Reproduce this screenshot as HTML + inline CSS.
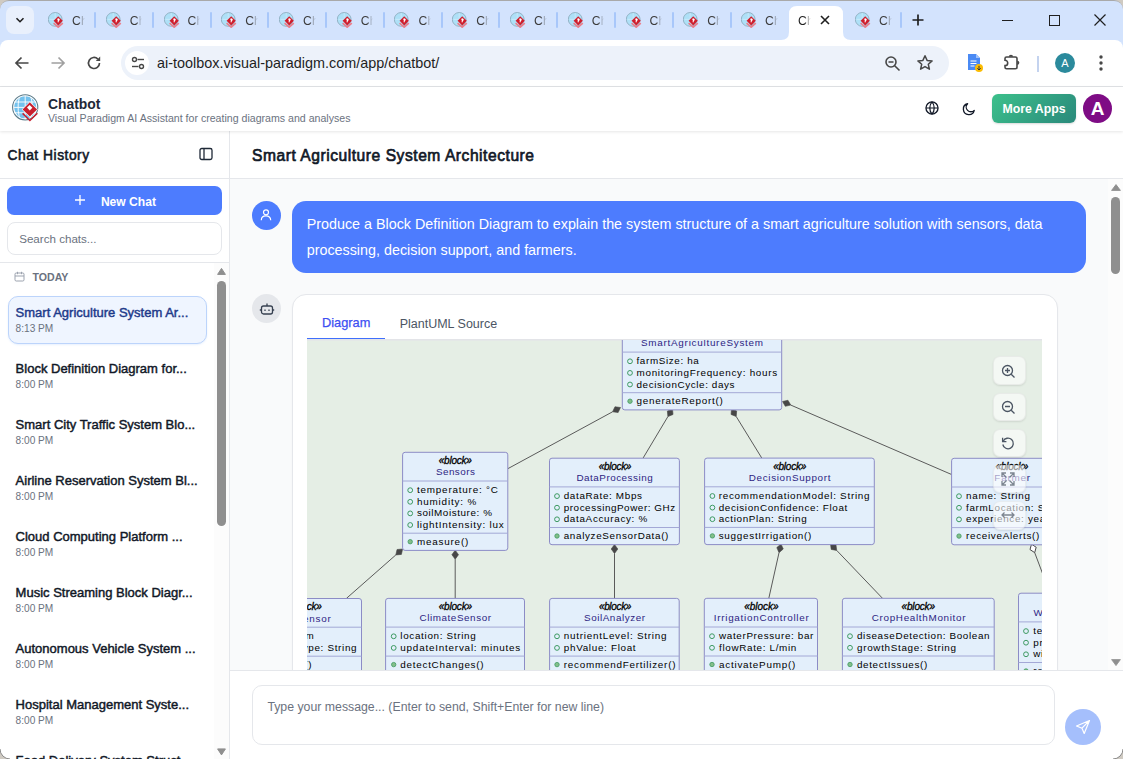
<!DOCTYPE html>
<html><head><meta charset="utf-8">
<style>
*{box-sizing:border-box;margin:0;padding:0}
html,body{width:1123px;height:759px;overflow:hidden;background:#fff;font-family:"Liberation Sans",sans-serif;position:relative}
.abs{position:absolute}
.tabtxt{position:absolute;top:13px;font-size:12.3px;color:#3c3c3c;width:12.5px;overflow:hidden;white-space:nowrap;line-height:16px;-webkit-mask-image:linear-gradient(90deg,#000 50%,rgba(0,0,0,.35) 80%,transparent 100%)}
</style></head><body>
<div class="abs" style="left:0;top:0;width:1123px;height:12px;background:#cfcac2"></div>
<div class="abs" style="left:0;top:0;width:1123px;height:48px;background:#d3e3fd;border-radius:9px 9px 0 0;border-top:1px solid #a9a9a9"></div>
<div class="abs" style="left:6px;top:6px;width:28px;height:28px;border-radius:8px;background:#e9f0fc"></div>
<svg class="abs" style="left:14px;top:14px" width="12" height="12" viewBox="0 0 12 12"><path d="M2.5 4.2L6 7.7 9.5 4.2" stroke="#1f1f1f" stroke-width="1.6" fill="none"/></svg>
<svg class="abs" style="left:48px;top:12px" width="16" height="16" viewBox="0 0 16 16"><circle cx="7.2" cy="7.4" r="6.9" fill="#aee0f7" stroke="#90aebf" stroke-width="0.9"/><path d="M1.5 7.4h11.5M7.2 1v12.8" stroke="#d6f0fb" stroke-width="0.6" fill="none"/><path d="M5.6 11.2l4.6 4 4.6-4" stroke="#ec7a88" stroke-width="1.6" fill="none"/><path d="M10.2 4.2l4.6 4.6-4.6 4.6-4.6-4.6z" fill="#cf1d2c"/><path d="M9.2 7.2a1.3 1.3 0 1 1 1.8 1.6l-0.6 1.6-0.8-0.2 0.2-1.6z" fill="#fff"/></svg>
<div class="tabtxt" style="left:72.0px">Ch</div>
<div class="abs" style="left:94.2px;top:12px;width:2px;height:16px;background:#a8c7fa;border-radius:1px"></div>
<svg class="abs" style="left:106px;top:12px" width="16" height="16" viewBox="0 0 16 16"><circle cx="7.2" cy="7.4" r="6.9" fill="#aee0f7" stroke="#90aebf" stroke-width="0.9"/><path d="M1.5 7.4h11.5M7.2 1v12.8" stroke="#d6f0fb" stroke-width="0.6" fill="none"/><path d="M5.6 11.2l4.6 4 4.6-4" stroke="#ec7a88" stroke-width="1.6" fill="none"/><path d="M10.2 4.2l4.6 4.6-4.6 4.6-4.6-4.6z" fill="#cf1d2c"/><path d="M9.2 7.2a1.3 1.3 0 1 1 1.8 1.6l-0.6 1.6-0.8-0.2 0.2-1.6z" fill="#fff"/></svg>
<div class="tabtxt" style="left:129.8px">Ch</div>
<div class="abs" style="left:151.9px;top:12px;width:2px;height:16px;background:#a8c7fa;border-radius:1px"></div>
<svg class="abs" style="left:164px;top:12px" width="16" height="16" viewBox="0 0 16 16"><circle cx="7.2" cy="7.4" r="6.9" fill="#aee0f7" stroke="#90aebf" stroke-width="0.9"/><path d="M1.5 7.4h11.5M7.2 1v12.8" stroke="#d6f0fb" stroke-width="0.6" fill="none"/><path d="M5.6 11.2l4.6 4 4.6-4" stroke="#ec7a88" stroke-width="1.6" fill="none"/><path d="M10.2 4.2l4.6 4.6-4.6 4.6-4.6-4.6z" fill="#cf1d2c"/><path d="M9.2 7.2a1.3 1.3 0 1 1 1.8 1.6l-0.6 1.6-0.8-0.2 0.2-1.6z" fill="#fff"/></svg>
<div class="tabtxt" style="left:187.5px">Ch</div>
<div class="abs" style="left:209.7px;top:12px;width:2px;height:16px;background:#a8c7fa;border-radius:1px"></div>
<svg class="abs" style="left:221px;top:12px" width="16" height="16" viewBox="0 0 16 16"><circle cx="7.2" cy="7.4" r="6.9" fill="#aee0f7" stroke="#90aebf" stroke-width="0.9"/><path d="M1.5 7.4h11.5M7.2 1v12.8" stroke="#d6f0fb" stroke-width="0.6" fill="none"/><path d="M5.6 11.2l4.6 4 4.6-4" stroke="#ec7a88" stroke-width="1.6" fill="none"/><path d="M10.2 4.2l4.6 4.6-4.6 4.6-4.6-4.6z" fill="#cf1d2c"/><path d="M9.2 7.2a1.3 1.3 0 1 1 1.8 1.6l-0.6 1.6-0.8-0.2 0.2-1.6z" fill="#fff"/></svg>
<div class="tabtxt" style="left:245.2px">Ch</div>
<div class="abs" style="left:267.4px;top:12px;width:2px;height:16px;background:#a8c7fa;border-radius:1px"></div>
<svg class="abs" style="left:279px;top:12px" width="16" height="16" viewBox="0 0 16 16"><circle cx="7.2" cy="7.4" r="6.9" fill="#aee0f7" stroke="#90aebf" stroke-width="0.9"/><path d="M1.5 7.4h11.5M7.2 1v12.8" stroke="#d6f0fb" stroke-width="0.6" fill="none"/><path d="M5.6 11.2l4.6 4 4.6-4" stroke="#ec7a88" stroke-width="1.6" fill="none"/><path d="M10.2 4.2l4.6 4.6-4.6 4.6-4.6-4.6z" fill="#cf1d2c"/><path d="M9.2 7.2a1.3 1.3 0 1 1 1.8 1.6l-0.6 1.6-0.8-0.2 0.2-1.6z" fill="#fff"/></svg>
<div class="tabtxt" style="left:303.0px">Ch</div>
<div class="abs" style="left:325.2px;top:12px;width:2px;height:16px;background:#a8c7fa;border-radius:1px"></div>
<svg class="abs" style="left:337px;top:12px" width="16" height="16" viewBox="0 0 16 16"><circle cx="7.2" cy="7.4" r="6.9" fill="#aee0f7" stroke="#90aebf" stroke-width="0.9"/><path d="M1.5 7.4h11.5M7.2 1v12.8" stroke="#d6f0fb" stroke-width="0.6" fill="none"/><path d="M5.6 11.2l4.6 4 4.6-4" stroke="#ec7a88" stroke-width="1.6" fill="none"/><path d="M10.2 4.2l4.6 4.6-4.6 4.6-4.6-4.6z" fill="#cf1d2c"/><path d="M9.2 7.2a1.3 1.3 0 1 1 1.8 1.6l-0.6 1.6-0.8-0.2 0.2-1.6z" fill="#fff"/></svg>
<div class="tabtxt" style="left:360.8px">Ch</div>
<div class="abs" style="left:382.9px;top:12px;width:2px;height:16px;background:#a8c7fa;border-radius:1px"></div>
<svg class="abs" style="left:394px;top:12px" width="16" height="16" viewBox="0 0 16 16"><circle cx="7.2" cy="7.4" r="6.9" fill="#aee0f7" stroke="#90aebf" stroke-width="0.9"/><path d="M1.5 7.4h11.5M7.2 1v12.8" stroke="#d6f0fb" stroke-width="0.6" fill="none"/><path d="M5.6 11.2l4.6 4 4.6-4" stroke="#ec7a88" stroke-width="1.6" fill="none"/><path d="M10.2 4.2l4.6 4.6-4.6 4.6-4.6-4.6z" fill="#cf1d2c"/><path d="M9.2 7.2a1.3 1.3 0 1 1 1.8 1.6l-0.6 1.6-0.8-0.2 0.2-1.6z" fill="#fff"/></svg>
<div class="tabtxt" style="left:418.5px">Ch</div>
<div class="abs" style="left:440.7px;top:12px;width:2px;height:16px;background:#a8c7fa;border-radius:1px"></div>
<svg class="abs" style="left:452px;top:12px" width="16" height="16" viewBox="0 0 16 16"><circle cx="7.2" cy="7.4" r="6.9" fill="#aee0f7" stroke="#90aebf" stroke-width="0.9"/><path d="M1.5 7.4h11.5M7.2 1v12.8" stroke="#d6f0fb" stroke-width="0.6" fill="none"/><path d="M5.6 11.2l4.6 4 4.6-4" stroke="#ec7a88" stroke-width="1.6" fill="none"/><path d="M10.2 4.2l4.6 4.6-4.6 4.6-4.6-4.6z" fill="#cf1d2c"/><path d="M9.2 7.2a1.3 1.3 0 1 1 1.8 1.6l-0.6 1.6-0.8-0.2 0.2-1.6z" fill="#fff"/></svg>
<div class="tabtxt" style="left:476.2px">Ch</div>
<div class="abs" style="left:498.4px;top:12px;width:2px;height:16px;background:#a8c7fa;border-radius:1px"></div>
<svg class="abs" style="left:510px;top:12px" width="16" height="16" viewBox="0 0 16 16"><circle cx="7.2" cy="7.4" r="6.9" fill="#aee0f7" stroke="#90aebf" stroke-width="0.9"/><path d="M1.5 7.4h11.5M7.2 1v12.8" stroke="#d6f0fb" stroke-width="0.6" fill="none"/><path d="M5.6 11.2l4.6 4 4.6-4" stroke="#ec7a88" stroke-width="1.6" fill="none"/><path d="M10.2 4.2l4.6 4.6-4.6 4.6-4.6-4.6z" fill="#cf1d2c"/><path d="M9.2 7.2a1.3 1.3 0 1 1 1.8 1.6l-0.6 1.6-0.8-0.2 0.2-1.6z" fill="#fff"/></svg>
<div class="tabtxt" style="left:534.0px">Ch</div>
<div class="abs" style="left:556.2px;top:12px;width:2px;height:16px;background:#a8c7fa;border-radius:1px"></div>
<svg class="abs" style="left:568px;top:12px" width="16" height="16" viewBox="0 0 16 16"><circle cx="7.2" cy="7.4" r="6.9" fill="#aee0f7" stroke="#90aebf" stroke-width="0.9"/><path d="M1.5 7.4h11.5M7.2 1v12.8" stroke="#d6f0fb" stroke-width="0.6" fill="none"/><path d="M5.6 11.2l4.6 4 4.6-4" stroke="#ec7a88" stroke-width="1.6" fill="none"/><path d="M10.2 4.2l4.6 4.6-4.6 4.6-4.6-4.6z" fill="#cf1d2c"/><path d="M9.2 7.2a1.3 1.3 0 1 1 1.8 1.6l-0.6 1.6-0.8-0.2 0.2-1.6z" fill="#fff"/></svg>
<div class="tabtxt" style="left:591.8px">Ch</div>
<div class="abs" style="left:614.0px;top:12px;width:2px;height:16px;background:#a8c7fa;border-radius:1px"></div>
<svg class="abs" style="left:626px;top:12px" width="16" height="16" viewBox="0 0 16 16"><circle cx="7.2" cy="7.4" r="6.9" fill="#aee0f7" stroke="#90aebf" stroke-width="0.9"/><path d="M1.5 7.4h11.5M7.2 1v12.8" stroke="#d6f0fb" stroke-width="0.6" fill="none"/><path d="M5.6 11.2l4.6 4 4.6-4" stroke="#ec7a88" stroke-width="1.6" fill="none"/><path d="M10.2 4.2l4.6 4.6-4.6 4.6-4.6-4.6z" fill="#cf1d2c"/><path d="M9.2 7.2a1.3 1.3 0 1 1 1.8 1.6l-0.6 1.6-0.8-0.2 0.2-1.6z" fill="#fff"/></svg>
<div class="tabtxt" style="left:649.5px">Ch</div>
<div class="abs" style="left:671.7px;top:12px;width:2px;height:16px;background:#a8c7fa;border-radius:1px"></div>
<svg class="abs" style="left:683px;top:12px" width="16" height="16" viewBox="0 0 16 16"><circle cx="7.2" cy="7.4" r="6.9" fill="#aee0f7" stroke="#90aebf" stroke-width="0.9"/><path d="M1.5 7.4h11.5M7.2 1v12.8" stroke="#d6f0fb" stroke-width="0.6" fill="none"/><path d="M5.6 11.2l4.6 4 4.6-4" stroke="#ec7a88" stroke-width="1.6" fill="none"/><path d="M10.2 4.2l4.6 4.6-4.6 4.6-4.6-4.6z" fill="#cf1d2c"/><path d="M9.2 7.2a1.3 1.3 0 1 1 1.8 1.6l-0.6 1.6-0.8-0.2 0.2-1.6z" fill="#fff"/></svg>
<div class="tabtxt" style="left:707.2px">Ch</div>
<div class="abs" style="left:729.5px;top:12px;width:2px;height:16px;background:#a8c7fa;border-radius:1px"></div>
<svg class="abs" style="left:741px;top:12px" width="16" height="16" viewBox="0 0 16 16"><circle cx="7.2" cy="7.4" r="6.9" fill="#aee0f7" stroke="#90aebf" stroke-width="0.9"/><path d="M1.5 7.4h11.5M7.2 1v12.8" stroke="#d6f0fb" stroke-width="0.6" fill="none"/><path d="M5.6 11.2l4.6 4 4.6-4" stroke="#ec7a88" stroke-width="1.6" fill="none"/><path d="M10.2 4.2l4.6 4.6-4.6 4.6-4.6-4.6z" fill="#cf1d2c"/><path d="M9.2 7.2a1.3 1.3 0 1 1 1.8 1.6l-0.6 1.6-0.8-0.2 0.2-1.6z" fill="#fff"/></svg>
<div class="tabtxt" style="left:765.0px">Ch</div>
<svg class="abs" style="left:781px;top:6px" width="70" height="34" viewBox="0 0 70 34"><path d="M0 34 Q8 34 8 26 V8 Q8 0 16 0 H54 Q62 0 62 8 V26 Q62 34 70 34 Z" fill="#fff"/></svg>
<div class="tabtxt" style="left:798px;color:#1f1f1f">Ch</div>
<svg class="abs" style="left:818px;top:13px" width="14" height="14" viewBox="0 0 14 14"><path d="M3 3L11 11M11 3L3 11" stroke="#1f1f1f" stroke-width="1.6"/></svg>
<svg class="abs" style="left:855px;top:12px" width="16" height="16" viewBox="0 0 16 16"><circle cx="7.2" cy="7.4" r="6.9" fill="#aee0f7" stroke="#90aebf" stroke-width="0.9"/><path d="M1.5 7.4h11.5M7.2 1v12.8" stroke="#d6f0fb" stroke-width="0.6" fill="none"/><path d="M5.6 11.2l4.6 4 4.6-4" stroke="#ec7a88" stroke-width="1.6" fill="none"/><path d="M10.2 4.2l4.6 4.6-4.6 4.6-4.6-4.6z" fill="#cf1d2c"/><path d="M9.2 7.2a1.3 1.3 0 1 1 1.8 1.6l-0.6 1.6-0.8-0.2 0.2-1.6z" fill="#fff"/></svg>
<div class="tabtxt" style="left:879px">Ch</div>
<div class="abs" style="left:900px;top:12px;width:2px;height:16px;background:#a8c7fa;border-radius:1px"></div>
<svg class="abs" style="left:910px;top:12px" width="16" height="16" viewBox="0 0 16 16"><path d="M8 2.5V13.5M2.5 8H13.5" stroke="#1f1f1f" stroke-width="1.7"/></svg>
<div class="abs" style="left:1002px;top:19.5px;width:11px;height:1.2px;background:#1f1f1f"></div>
<div class="abs" style="left:1048.5px;top:14.5px;width:11px;height:11px;border:1.2px solid #1f1f1f"></div>
<svg class="abs" style="left:1093px;top:13px" width="14" height="14" viewBox="0 0 14 14"><path d="M1.5 1.5L12.5 12.5M12.5 1.5L1.5 12.5" stroke="#1f1f1f" stroke-width="1.2"/></svg>
<div class="abs" style="left:0;top:40px;width:1123px;height:47px;background:#fff;border-bottom:1px solid #e1e3e6;border-radius:8px 8px 0 0"></div>
<svg class="abs" style="left:12px;top:53px" width="20" height="20" viewBox="0 0 20 20"><path d="M16.5 10H4.5M9.5 4.5L4 10l5.5 5.5" stroke="#474747" stroke-width="1.7" fill="none"/></svg>
<svg class="abs" style="left:48px;top:53px" width="20" height="20" viewBox="0 0 20 20"><path d="M3.5 10H15.5M10.5 4.5L16 10l-5.5 5.5" stroke="#a0a0a0" stroke-width="1.7" fill="none"/></svg>
<svg class="abs" style="left:84px;top:53px" width="20" height="20" viewBox="0 0 20 20"><path d="M15.5 10a5.5 5.5 0 1 1-1.6-3.9" stroke="#474747" stroke-width="1.7" fill="none"/><path d="M16.2 3.5v4.4h-4.4z" fill="#474747"/></svg>
<div class="abs" style="left:120.5px;top:46px;width:828.5px;height:34px;border-radius:17px;background:#edf2fa"></div>
<div class="abs" style="left:125px;top:51px;width:24px;height:24px;border-radius:12px;background:#fff"></div>
<svg class="abs" style="left:130px;top:55px" width="16" height="16" viewBox="0 0 16 16"><circle cx="4.5" cy="4.5" r="2" stroke="#474747" stroke-width="1.4" fill="none"/><path d="M7.5 4.5H14" stroke="#474747" stroke-width="1.4"/><circle cx="11.5" cy="11.5" r="2" stroke="#474747" stroke-width="1.4" fill="none"/><path d="M2 11.5H8.5" stroke="#474747" stroke-width="1.4"/></svg>
<div class="abs" style="left:157px;top:54px;font-size:14.4px;line-height:18px;color:#1f1f1f;white-space:nowrap">ai-toolbox.visual-paradigm.com/app/chatbot/</div>
<svg class="abs" style="left:884px;top:55px" width="18" height="18" viewBox="0 0 18 18"><circle cx="7" cy="7" r="5" stroke="#474747" stroke-width="1.6" fill="none"/><path d="M10.7 10.7L15.5 15.5M4.5 7H9.5" stroke="#474747" stroke-width="1.6"/></svg>
<svg class="abs" style="left:916px;top:54px" width="18" height="18" viewBox="0 0 18 18"><path d="M9 1.8l2.1 4.6 5 .5-3.8 3.4 1.1 4.9L9 12.6l-4.4 2.6 1.1-4.9L1.9 6.9l5-.5z" stroke="#474747" stroke-width="1.5" fill="none" stroke-linejoin="round"/></svg>
<svg class="abs" style="left:966px;top:53px" width="18" height="20" viewBox="0 0 18 20"><path d="M2 1h8l4 4v12H2z" fill="#4a8af4"/><path d="M10 1v4h4" fill="#a1c2fa"/><path d="M4.5 8h6M4.5 10.5h6M4.5 13h4" stroke="#fff" stroke-width="1"/><circle cx="13" cy="15" r="4" fill="#fbbc04"/><path d="M13 12.8v4M11.3 15.3l1.7 1.7 1.7-1.7" stroke="#333" stroke-width="1" fill="none"/></svg>
<svg class="abs" style="left:998px;top:50px" width="28" height="26" viewBox="998 50 28 26"><path d="M1006.6 57H1015.4Q1017 57 1017 58.6V67.2Q1017 68.8 1015.4 68.8H1006.6Q1005 68.8 1005 67.2V65.6A2.7 2.7 0 0 0 1005 60.2V58.6Q1005 57 1006.6 57Z" stroke="#474747" stroke-width="1.6" fill="none"/><path d="M1008.8 56.8A2.15 2.15 0 0 1 1013.1 56.8Z" fill="#474747"/><path d="M1017.2 60.7A2.15 2.15 0 0 1 1017.2 65Z" fill="#474747"/></svg>
<div class="abs" style="left:1037px;top:56px;width:1.5px;height:16px;background:#c4d3ef"></div>
<div class="abs" style="left:1055px;top:53px;width:20px;height:20px;border-radius:10px;background:#2b8a9c;color:#fff;font-size:11px;line-height:20px;text-align:center">A</div>
<svg class="abs" style="left:1095px;top:53px" width="12" height="20" viewBox="0 0 12 20"><circle cx="6" cy="4" r="1.7" fill="#474747"/><circle cx="6" cy="10" r="1.7" fill="#474747"/><circle cx="6" cy="16" r="1.7" fill="#474747"/></svg>
<div class="abs" style="left:0;top:87px;width:1123px;height:44px;background:#fff;box-shadow:0 1px 3px rgba(0,0,0,.10);z-index:3"></div>
<svg class="abs" style="left:8px;top:90px;z-index:4" width="36" height="34" viewBox="8 90 36 34"><circle cx="25.2" cy="107.35" r="12.6" fill="#fff" stroke="#5d7c8a" stroke-width="1.1"/><circle cx="25.2" cy="107.35" r="11" fill="#74c2ee"/><path d="M14 102h22M14 107.4h22M14 112.8h22M25.2 96v23M20 96.8c-2.5 3-2.5 18 0 21M30.4 96.8c2.5 3 2.5 18 0 21" stroke="#fff" stroke-width="0.9" fill="none"/><path d="M21.9 109.4L29.8 101.4 37.9 109.5 29.9 117.4z" fill="#fff"/><path d="M22.6 109.4L29.8 102.2 37.1 109.5 29.9 116.6z" fill="#c8202f"/><path d="M27 107.6l2.6-2.6 2.8 2.8-2.6 2.6z" fill="#fff"/><path d="M22.6 113.4l7.3 7.1 7.5-7.3" stroke="#c8202f" stroke-width="1.5" fill="none"/></svg>
<div class="abs" style="left:48px;top:95px;font-size:13.9px;font-weight:bold;color:#1f2937;line-height:18px;z-index:4">Chatbot</div>
<div class="abs" style="left:48px;top:111px;font-size:10.6px;color:#6b7280;line-height:14px;white-space:nowrap;z-index:4">Visual Paradigm AI Assistant for creating diagrams and analyses</div>
<svg class="abs" style="left:925.3px;top:101.2px;z-index:4" width="14" height="14" viewBox="0 0 16 16"><circle cx="8" cy="8" r="6.9" stroke="#111827" stroke-width="1.5" fill="none"/><path d="M1.2 8h13.6M8 1.1c-3.4 3.8-3.4 10 0 13.8M8 1.1c3.4 3.8 3.4 10 0 13.8" stroke="#111827" stroke-width="1.4" fill="none"/></svg>
<svg class="abs" style="left:961.5px;top:101.8px;z-index:4" width="14" height="14" viewBox="0 0 16 16"><path d="M14 9.6A6.3 6.3 0 1 1 6.4 2a5 5 0 0 0 7.6 7.6z" stroke="#111827" stroke-width="1.5" fill="none" stroke-linejoin="round"/></svg>
<div class="abs" style="left:992px;top:94px;width:84px;height:29px;border-radius:6px;background:linear-gradient(135deg,#3cc08b,#2a897b);box-shadow:0 1px 2px rgba(0,0,0,.15);color:#fff;font-weight:bold;font-size:12.3px;line-height:30.5px;text-align:center;z-index:4">More Apps</div>
<div class="abs" style="left:1083px;top:94px;width:29px;height:29px;border-radius:15px;background:#7e0c85;color:#fff;font-weight:bold;font-size:19px;line-height:29px;text-align:center;z-index:4">A</div>
<div class="abs" style="left:0;top:131px;width:230px;height:628px;background:#fff;border-right:1px solid #e5e7eb"></div>
<div class="abs" style="left:7.5px;top:147.2px;font-size:13.8px;-webkit-text-stroke:0.55px #111827;letter-spacing:0.52px;color:#111827;line-height:18px">Chat History</div>
<svg class="abs" style="left:199px;top:147px" width="14" height="14" viewBox="0 0 14 14"><rect x="1" y="1.5" width="12" height="11" rx="1.8" stroke="#1f2937" stroke-width="1.3" fill="none"/><path d="M5 1.5v11" stroke="#1f2937" stroke-width="1.3"/></svg>
<div class="abs" style="left:0;top:178px;width:229px;height:1px;background:#e5e7eb"></div>
<div class="abs" style="left:7px;top:186px;width:215px;height:29px;border-radius:7px;background:#4d7cfe"></div>
<svg class="abs" style="left:74px;top:194px" width="12" height="12" viewBox="0 0 12 12"><path d="M6 1v10M1 6h10" stroke="#fff" stroke-width="1.3"/></svg>
<div class="abs" style="left:100.9px;top:193.7px;font-size:12.1px;font-weight:bold;color:#fff;line-height:16px">New Chat</div>
<div class="abs" style="left:7px;top:222px;width:215px;height:33px;border-radius:8px;background:#fff;border:1px solid #e5e7eb"></div>
<div class="abs" style="left:19.2px;top:231.4px;font-size:11.6px;color:#6b7280;line-height:15px">Search chats...</div>
<div class="abs" style="left:0;top:262px;width:229px;height:1px;background:#e5e7eb"></div>
<svg class="abs" style="left:14px;top:271px" width="11" height="11" viewBox="0 0 11 11"><rect x="1" y="2" width="9" height="8" rx="1.2" stroke="#9ca3af" stroke-width="1" fill="none"/><path d="M1 5h9M3.5 0.8v2.4M7.5 0.8v2.4" stroke="#9ca3af" stroke-width="1"/></svg>
<div class="abs" style="left:32.5px;top:270px;font-size:10.6px;font-weight:bold;color:#6b7280;line-height:14px">TODAY</div>
<div class="abs" style="left:214px;top:263px;width:15px;height:496px;background:#fcfcfc"></div>
<svg class="abs" style="left:214px;top:266px" width="15" height="10" viewBox="0 0 15 10"><path d="M3.6 8.4L7.5 2.4 11.4 8.4z" fill="#8f8f8f" stroke="#8f8f8f" stroke-width="1" stroke-linejoin="round"/></svg>
<div class="abs" style="left:217px;top:281px;width:9px;height:245px;border-radius:5px;background:#8f8f8f"></div>
<svg class="abs" style="left:214px;top:746.5px" width="15" height="10" viewBox="0 0 15 10"><path d="M3.6 1.9L7.5 7.9 11.4 1.9z" fill="#8f8f8f" stroke="#8f8f8f" stroke-width="1" stroke-linejoin="round"/></svg>
<div class="abs" style="left:7.5px;top:295.5px;width:199px;height:48px;border-radius:10px;background:#eff5ff;border:1px solid #bcd4fb;box-shadow:0 1px 2px rgba(59,130,246,.12)"></div>
<div class="abs" style="left:0;top:263px;width:214px;height:496px;overflow:hidden">
<div class="abs" style="left:15.6px;top:42.6px;font-size:13px;-webkit-text-stroke:0.45px #1e3a8a;color:#1e3a8a;line-height:14px;white-space:nowrap">Smart Agriculture System Ar...</div>
<div class="abs" style="left:15.6px;top:59.8px;font-size:10.15px;color:#6b7280;line-height:12px;white-space:nowrap">8:13 PM</div>
<div class="abs" style="left:15.6px;top:98.6px;font-size:13px;-webkit-text-stroke:0.45px #111827;color:#111827;line-height:14px;white-space:nowrap">Block Definition Diagram for...</div>
<div class="abs" style="left:15.6px;top:115.8px;font-size:10.15px;color:#6b7280;line-height:12px;white-space:nowrap">8:00 PM</div>
<div class="abs" style="left:15.6px;top:154.6px;font-size:13px;-webkit-text-stroke:0.45px #111827;color:#111827;line-height:14px;white-space:nowrap">Smart City Traffic System Blo...</div>
<div class="abs" style="left:15.6px;top:171.8px;font-size:10.15px;color:#6b7280;line-height:12px;white-space:nowrap">8:00 PM</div>
<div class="abs" style="left:15.6px;top:210.6px;font-size:13px;-webkit-text-stroke:0.45px #111827;color:#111827;line-height:14px;white-space:nowrap">Airline Reservation System Bl...</div>
<div class="abs" style="left:15.6px;top:227.8px;font-size:10.15px;color:#6b7280;line-height:12px;white-space:nowrap">8:00 PM</div>
<div class="abs" style="left:15.6px;top:266.6px;font-size:13px;-webkit-text-stroke:0.45px #111827;color:#111827;line-height:14px;white-space:nowrap">Cloud Computing Platform ...</div>
<div class="abs" style="left:15.6px;top:283.8px;font-size:10.15px;color:#6b7280;line-height:12px;white-space:nowrap">8:00 PM</div>
<div class="abs" style="left:15.6px;top:322.6px;font-size:13px;-webkit-text-stroke:0.45px #111827;color:#111827;line-height:14px;white-space:nowrap">Music Streaming Block Diagr...</div>
<div class="abs" style="left:15.6px;top:339.8px;font-size:10.15px;color:#6b7280;line-height:12px;white-space:nowrap">8:00 PM</div>
<div class="abs" style="left:15.6px;top:378.6px;font-size:13px;-webkit-text-stroke:0.45px #111827;color:#111827;line-height:14px;white-space:nowrap">Autonomous Vehicle System ...</div>
<div class="abs" style="left:15.6px;top:395.8px;font-size:10.15px;color:#6b7280;line-height:12px;white-space:nowrap">8:00 PM</div>
<div class="abs" style="left:15.6px;top:434.6px;font-size:13px;-webkit-text-stroke:0.45px #111827;color:#111827;line-height:14px;white-space:nowrap">Hospital Management Syste...</div>
<div class="abs" style="left:15.6px;top:451.8px;font-size:10.15px;color:#6b7280;line-height:12px;white-space:nowrap">8:00 PM</div>
<div class="abs" style="left:15.6px;top:490.6px;font-size:13px;-webkit-text-stroke:0.45px #111827;color:#111827;line-height:14px;white-space:nowrap">Food Delivery System Struct...</div>
<div class="abs" style="left:15.6px;top:507.8px;font-size:10.15px;color:#6b7280;line-height:12px;white-space:nowrap">8:00 PM</div>
</div>
<div class="abs" style="left:230px;top:131px;width:893px;height:48px;background:#fff;border-bottom:1px solid #e5e7eb"></div>
<div class="abs" style="left:252px;top:147.2px;font-size:15.6px;-webkit-text-stroke:0.65px #111827;letter-spacing:0.54px;color:#111827;line-height:18px;white-space:nowrap">Smart Agriculture System Architecture</div>
<div class="abs" style="left:230px;top:179px;width:893px;height:491px;background:#f9fafb"></div>
<div class="abs" style="left:1108px;top:179px;width:15px;height:491px;background:#fcfcfc"></div>
<svg class="abs" style="left:1110px;top:182px" width="12" height="10" viewBox="0 0 12 10"><path d="M1.6 8.4L6 2.6 10.4 8.4z" fill="#8f8f8f" stroke="#8f8f8f" stroke-width="0.9" stroke-linejoin="round"/></svg>
<div class="abs" style="left:1111px;top:197px;width:9px;height:77px;border-radius:5px;background:#8f8f8f"></div>
<svg class="abs" style="left:1110px;top:658px" width="12" height="10" viewBox="0 0 12 10"><path d="M1.6 1.6L6 7.6 10.4 1.6z" fill="#8f8f8f" stroke="#8f8f8f" stroke-width="0.8" stroke-linejoin="round"/></svg>
<div class="abs" style="left:252px;top:201px;width:28.5px;height:28.5px;border-radius:15px;background:#4d7cfe"></div>
<svg class="abs" style="left:258px;top:207px" width="16" height="16" viewBox="0 0 16 16"><circle cx="8" cy="5.3" r="2.5" stroke="#fff" stroke-width="1.2" fill="none"/><path d="M3.3 13.2c0-2.8 2-4.3 4.7-4.3s4.7 1.5 4.7 4.3" stroke="#fff" stroke-width="1.2" fill="none"/></svg>
<div class="abs" style="left:292px;top:201px;width:794px;height:72px;border-radius:14px;background:#4d7cfe"></div>
<div class="abs" style="left:306.7px;top:211px;width:770px;font-size:14.33px;line-height:26px;color:#fff">Produce a Block Definition Diagram to explain the system structure of a smart agriculture solution with sensors, data<br>processing, decision support, and farmers.</div>
<div class="abs" style="left:252px;top:294px;width:29px;height:29px;border-radius:15px;background:#e5e7eb"></div>
<svg class="abs" style="left:258.5px;top:300.5px" width="16" height="16" viewBox="0 0 16 16"><rect x="2.5" y="5" width="11" height="8" rx="2" stroke="#374151" stroke-width="1.3" fill="none"/><path d="M8 2.5V5M6 8.5v1.5M10 8.5v1.5M0.8 9h1.7M13.5 9h1.7" stroke="#374151" stroke-width="1.3"/></svg>
<div class="abs" style="left:292px;top:294px;width:766px;height:500px;border-radius:14px;background:#fff;border:1px solid #e5e7eb;box-shadow:0 1px 2px rgba(0,0,0,.04)"></div>
<div class="abs" style="left:322px;top:315px;font-size:12.8px;color:#3d4ff2;-webkit-text-stroke:0.25px #3d4ff2;line-height:16px">Diagram</div>
<div class="abs" style="left:399.7px;top:315.5px;font-size:12.5px;color:#4b5563;line-height:16px">PlantUML Source</div>
<div class="abs" style="left:307px;top:339.2px;width:735px;height:1.4px;background:#e3e4e8"></div>
<div class="abs" style="left:307px;top:337.6px;width:78px;height:1.7px;background:#3f6ffc"></div>
<svg class="abs" style="left:307px;top:340px" width="735" height="330" viewBox="307 340 735 330" font-family="Liberation Sans, sans-serif">
<rect x="307" y="340.6" width="735" height="332" fill="#e5eee5"/>
<line x1="612.59" y1="411.79" x2="507.80" y2="468.70" stroke="#5a5a5a" stroke-width="1"/><polygon points="620.50,407.50 614.97,406.75 612.59,411.79 618.12,412.55" fill="#474747" stroke="#474747" stroke-width="0.6"/>
<line x1="667.88" y1="416.62" x2="643.00" y2="458.20" stroke="#5a5a5a" stroke-width="1"/><polygon points="672.50,408.90 667.36,411.07 667.88,416.62 673.02,414.46" fill="#474747" stroke="#474747" stroke-width="0.6"/>
<line x1="736.22" y1="416.56" x2="761.80" y2="458.10" stroke="#5a5a5a" stroke-width="1"/><polygon points="731.50,408.90 731.05,414.46 736.22,416.56 736.67,411.00" fill="#474747" stroke="#474747" stroke-width="0.6"/>
<line x1="790.76" y1="405.07" x2="951.60" y2="474.50" stroke="#5a5a5a" stroke-width="1"/><polygon points="782.50,401.50 785.32,406.31 790.76,405.07 787.94,400.25" fill="#474747" stroke="#474747" stroke-width="0.6"/>
<line x1="395.84" y1="554.94" x2="346.30" y2="598.50" stroke="#5a5a5a" stroke-width="1"/><polygon points="402.60,549.00 397.04,549.49 395.84,554.94 401.40,554.45" fill="#474747" stroke="#474747" stroke-width="0.6"/>
<line x1="455.20" y1="559.20" x2="455.20" y2="598.40" stroke="#5a5a5a" stroke-width="1"/><polygon points="455.20,550.20 451.90,554.70 455.20,559.20 458.50,554.70" fill="#474747" stroke="#474747" stroke-width="0.6"/>
<line x1="614.50" y1="553.50" x2="614.50" y2="598.40" stroke="#5a5a5a" stroke-width="1"/><polygon points="614.50,544.50 611.20,549.00 614.50,553.50 617.80,549.00" fill="#474747" stroke="#474747" stroke-width="0.6"/>
<line x1="779.03" y1="552.68" x2="768.80" y2="598.30" stroke="#5a5a5a" stroke-width="1"/><polygon points="781.00,543.90 776.80,547.57 779.03,552.68 783.24,549.01" fill="#474747" stroke="#474747" stroke-width="0.6"/>
<line x1="836.72" y1="550.41" x2="882.50" y2="598.30" stroke="#5a5a5a" stroke-width="1"/><polygon points="830.50,543.90 831.22,549.43 836.72,550.41 835.99,544.87" fill="#474747" stroke="#474747" stroke-width="0.6"/>
<line x1="1034.68" y1="552.62" x2="1045.00" y2="580.00" stroke="#5a5a5a" stroke-width="1"/><polygon points="1031.50,544.20 1030.00,549.57 1034.68,552.62 1036.18,547.25" fill="#fff" stroke="#474747" stroke-width="1"/>
<rect x="622.3" y="323.4" width="159.4" height="86.5" rx="2.5" fill="#e3effb" stroke="#8c8cc6" stroke-width="1"/>
<line x1="622.3" y1="352.1" x2="781.7" y2="352.1" stroke="#a3a8d6" stroke-width="1"/>
<line x1="622.3" y1="392.7" x2="781.7" y2="392.7" stroke="#a3a8d6" stroke-width="1"/>
<text x="685.5" y="335.2" fill="#000" font-size="10" text-anchor="start" font-weight="normal" style="font-style:italic;stroke:#000;stroke-width:0.3px;" textLength="33.0" lengthAdjust="spacing">«block»</text>
<text x="641.0" y="346.4" fill="#2d2482" font-size="9.9" text-anchor="start" font-weight="normal" style="" textLength="122.0" lengthAdjust="spacing">SmartAgricultureSystem</text>
<circle cx="630.0" cy="361.3" r="2.4" fill="none" stroke="#3d9a62" stroke-width="1"/>
<text x="636.5" y="364.3" fill="#000" font-size="9.9" text-anchor="start" font-weight="normal" style="" textLength="62.3" lengthAdjust="spacing">farmSize: ha</text>
<circle cx="630.0" cy="372.9" r="2.4" fill="none" stroke="#3d9a62" stroke-width="1"/>
<text x="636.5" y="375.9" fill="#000" font-size="9.9" text-anchor="start" font-weight="normal" style="" textLength="140.7" lengthAdjust="spacing">monitoringFrequency: hours</text>
<circle cx="630.0" cy="384.5" r="2.4" fill="none" stroke="#3d9a62" stroke-width="1"/>
<text x="636.5" y="387.5" fill="#000" font-size="9.9" text-anchor="start" font-weight="normal" style="" textLength="98.0" lengthAdjust="spacing">decisionCycle: days</text>
<circle cx="630.0" cy="401.2" r="2.2" fill="#84be8a" stroke="#3d9a62" stroke-width="0.8"/>
<text x="636.5" y="404.2" fill="#000" font-size="9.9" text-anchor="start" font-weight="normal" style="" textLength="86.4" lengthAdjust="spacing">generateReport()</text>
<rect x="402.6" y="452.3" width="105.2" height="98.1" rx="2.5" fill="#e3effb" stroke="#8c8cc6" stroke-width="1"/>
<line x1="402.6" y1="481.0" x2="507.8" y2="481.0" stroke="#a3a8d6" stroke-width="1"/>
<line x1="402.6" y1="533.2" x2="507.8" y2="533.2" stroke="#a3a8d6" stroke-width="1"/>
<text x="438.7" y="464.1" fill="#000" font-size="10" text-anchor="start" font-weight="normal" style="font-style:italic;stroke:#000;stroke-width:0.3px;" textLength="33.2" lengthAdjust="spacing">«block»</text>
<text x="435.9" y="475.3" fill="#2d2482" font-size="9.9" text-anchor="start" font-weight="normal" style="" textLength="39.0" lengthAdjust="spacing">Sensors</text>
<circle cx="410.2" cy="490.2" r="2.4" fill="none" stroke="#3d9a62" stroke-width="1"/>
<text x="416.9" y="493.2" fill="#000" font-size="9.9" text-anchor="start" font-weight="normal" style="" textLength="81.1" lengthAdjust="spacing">temperature: °C</text>
<circle cx="410.2" cy="501.8" r="2.4" fill="none" stroke="#3d9a62" stroke-width="1"/>
<text x="416.9" y="504.8" fill="#000" font-size="9.9" text-anchor="start" font-weight="normal" style="" textLength="59.3" lengthAdjust="spacing">humidity: %</text>
<circle cx="410.2" cy="513.4" r="2.4" fill="none" stroke="#3d9a62" stroke-width="1"/>
<text x="416.9" y="516.4" fill="#000" font-size="9.9" text-anchor="start" font-weight="normal" style="" textLength="75.1" lengthAdjust="spacing">soilMoisture: %</text>
<circle cx="410.2" cy="525.0" r="2.4" fill="none" stroke="#3d9a62" stroke-width="1"/>
<text x="416.9" y="528.0" fill="#000" font-size="9.9" text-anchor="start" font-weight="normal" style="" textLength="86.7" lengthAdjust="spacing">lightIntensity: lux</text>
<circle cx="410.2" cy="541.7" r="2.2" fill="#84be8a" stroke="#3d9a62" stroke-width="0.8"/>
<text x="416.9" y="544.7" fill="#000" font-size="9.9" text-anchor="start" font-weight="normal" style="" textLength="51.4" lengthAdjust="spacing">measure()</text>
<rect x="549.5" y="458.2" width="129.9" height="86.5" rx="2.5" fill="#e3effb" stroke="#8c8cc6" stroke-width="1"/>
<line x1="549.5" y1="486.9" x2="679.4" y2="486.9" stroke="#a3a8d6" stroke-width="1"/>
<line x1="549.5" y1="527.5" x2="679.4" y2="527.5" stroke="#a3a8d6" stroke-width="1"/>
<text x="598.8" y="470.0" fill="#000" font-size="10" text-anchor="start" font-weight="normal" style="font-style:italic;stroke:#000;stroke-width:0.3px;" textLength="32.6" lengthAdjust="spacing">«block»</text>
<text x="576.4" y="481.2" fill="#2d2482" font-size="9.9" text-anchor="start" font-weight="normal" style="" textLength="76.3" lengthAdjust="spacing">DataProcessing</text>
<circle cx="557.0" cy="496.1" r="2.4" fill="none" stroke="#3d9a62" stroke-width="1"/>
<text x="563.7" y="499.1" fill="#000" font-size="9.9" text-anchor="start" font-weight="normal" style="" textLength="78.3" lengthAdjust="spacing">dataRate: Mbps</text>
<circle cx="557.0" cy="507.7" r="2.4" fill="none" stroke="#3d9a62" stroke-width="1"/>
<text x="563.7" y="510.7" fill="#000" font-size="9.9" text-anchor="start" font-weight="normal" style="" textLength="111.5" lengthAdjust="spacing">processingPower: GHz</text>
<circle cx="557.0" cy="519.3" r="2.4" fill="none" stroke="#3d9a62" stroke-width="1"/>
<text x="563.7" y="522.3" fill="#000" font-size="9.9" text-anchor="start" font-weight="normal" style="" textLength="83.5" lengthAdjust="spacing">dataAccuracy: %</text>
<circle cx="557.0" cy="536.0" r="2.2" fill="#84be8a" stroke="#3d9a62" stroke-width="0.8"/>
<text x="563.7" y="539.0" fill="#000" font-size="9.9" text-anchor="start" font-weight="normal" style="" textLength="104.7" lengthAdjust="spacing">analyzeSensorData()</text>
<rect x="704.6" y="458.1" width="169.7" height="86.5" rx="2.5" fill="#e3effb" stroke="#8c8cc6" stroke-width="1"/>
<line x1="704.6" y1="486.8" x2="874.3" y2="486.8" stroke="#a3a8d6" stroke-width="1"/>
<line x1="704.6" y1="527.4" x2="874.3" y2="527.4" stroke="#a3a8d6" stroke-width="1"/>
<text x="773.2" y="469.9" fill="#000" font-size="10" text-anchor="start" font-weight="normal" style="font-style:italic;stroke:#000;stroke-width:0.3px;" textLength="33.1" lengthAdjust="spacing">«block»</text>
<text x="748.8" y="481.1" fill="#2d2482" font-size="9.9" text-anchor="start" font-weight="normal" style="" textLength="81.6" lengthAdjust="spacing">DecisionSupport</text>
<circle cx="712.4" cy="496.0" r="2.4" fill="none" stroke="#3d9a62" stroke-width="1"/>
<text x="718.7" y="499.0" fill="#000" font-size="9.9" text-anchor="start" font-weight="normal" style="" textLength="150.9" lengthAdjust="spacing">recommendationModel: String</text>
<circle cx="712.4" cy="507.6" r="2.4" fill="none" stroke="#3d9a62" stroke-width="1"/>
<text x="718.7" y="510.6" fill="#000" font-size="9.9" text-anchor="start" font-weight="normal" style="" textLength="128.6" lengthAdjust="spacing">decisionConfidence: Float</text>
<circle cx="712.4" cy="519.2" r="2.4" fill="none" stroke="#3d9a62" stroke-width="1"/>
<text x="718.7" y="522.2" fill="#000" font-size="9.9" text-anchor="start" font-weight="normal" style="" textLength="88.0" lengthAdjust="spacing">actionPlan: String</text>
<circle cx="712.4" cy="535.9" r="2.2" fill="#84be8a" stroke="#3d9a62" stroke-width="0.8"/>
<text x="718.7" y="538.9" fill="#000" font-size="9.9" text-anchor="start" font-weight="normal" style="" textLength="92.7" lengthAdjust="spacing">suggestIrrigation()</text>
<rect x="951.6" y="458.3" width="148.4" height="86.5" rx="2.5" fill="#e3effb" stroke="#8c8cc6" stroke-width="1"/>
<line x1="951.6" y1="487.0" x2="1100.0" y2="487.0" stroke="#a3a8d6" stroke-width="1"/>
<line x1="951.6" y1="527.6" x2="1100.0" y2="527.6" stroke="#a3a8d6" stroke-width="1"/>
<text x="995.8" y="470.1" fill="#000" font-size="10" text-anchor="start" font-weight="normal" style="font-style:italic;stroke:#000;stroke-width:0.3px;" textLength="32.6" lengthAdjust="spacing">«block»</text>
<text x="994.3" y="481.3" fill="#2d2482" font-size="9.9" text-anchor="start" font-weight="normal" style="" textLength="35.8" lengthAdjust="spacing">Farmer</text>
<circle cx="959.0" cy="496.2" r="2.4" fill="none" stroke="#3d9a62" stroke-width="1"/>
<text x="966.0" y="499.2" fill="#000" font-size="9.9" text-anchor="start" font-weight="normal" style="" textLength="64.0" lengthAdjust="spacing">name: String</text>
<circle cx="959.0" cy="507.8" r="2.4" fill="none" stroke="#3d9a62" stroke-width="1"/>
<text x="966.0" y="510.8" fill="#000" font-size="9.9" text-anchor="start" font-weight="normal" style="" textLength="100.7" lengthAdjust="spacing">farmLocation: String</text>
<circle cx="959.0" cy="519.4" r="2.4" fill="none" stroke="#3d9a62" stroke-width="1"/>
<text x="966.0" y="522.4" fill="#000" font-size="9.9" text-anchor="start" font-weight="normal" style="" textLength="88.8" lengthAdjust="spacing">experience: years</text>
<circle cx="959.0" cy="536.1" r="2.2" fill="#84be8a" stroke="#3d9a62" stroke-width="0.8"/>
<text x="966.0" y="539.1" fill="#000" font-size="9.9" text-anchor="start" font-weight="normal" style="" textLength="73.3" lengthAdjust="spacing">receiveAlerts()</text>
<rect x="230.0" y="598.5" width="131.5" height="74.9" rx="2.5" fill="#e3effb" stroke="#8c8cc6" stroke-width="1"/>
<line x1="230.0" y1="627.2" x2="361.5" y2="627.2" stroke="#a3a8d6" stroke-width="1"/>
<line x1="230.0" y1="656.2" x2="361.5" y2="656.2" stroke="#a3a8d6" stroke-width="1"/>
<circle cx="242.0" cy="636.4" r="2.4" fill="none" stroke="#3d9a62" stroke-width="1"/>
<text x="250.0" y="639.4" fill="#000" font-size="9.9" text-anchor="start" font-weight="normal" style=""></text>
<circle cx="242.0" cy="648.0" r="2.4" fill="none" stroke="#3d9a62" stroke-width="1"/>
<text x="250.0" y="651.0" fill="#000" font-size="9.9" text-anchor="start" font-weight="normal" style=""></text>
<circle cx="242.0" cy="664.7" r="2.2" fill="#84be8a" stroke="#3d9a62" stroke-width="0.8"/>
<text x="250.0" y="667.7" fill="#000" font-size="9.9" text-anchor="start" font-weight="normal" style=""></text>
<text x="252.9" y="621.5" fill="#2d2482" font-size="9.9" text-anchor="start" font-weight="normal" style="" textLength="78.0" lengthAdjust="spacing">WeatherSensor</text>
<text x="288.8" y="610.3" fill="#000" font-size="10" text-anchor="start" font-weight="normal" style="font-style:italic;stroke:#000;stroke-width:0.3px;" textLength="33.0" lengthAdjust="spacing">«block»</text>
<text x="269.3" y="639.4" fill="#000" font-size="9.9" text-anchor="start" font-weight="normal" style="" textLength="44.4" lengthAdjust="spacing">range: m</text>
<text x="262.8" y="651.0" fill="#000" font-size="9.9" text-anchor="start" font-weight="normal" style="" textLength="93.8" lengthAdjust="spacing">sensorType: String</text>
<text x="273.5" y="667.7" fill="#000" font-size="9.9" text-anchor="start" font-weight="normal" style="" textLength="38.1" lengthAdjust="spacing">detect()</text>
<rect x="385.6" y="598.4" width="138.9" height="74.9" rx="2.5" fill="#e3effb" stroke="#8c8cc6" stroke-width="1"/>
<line x1="385.6" y1="627.1" x2="524.5" y2="627.1" stroke="#a3a8d6" stroke-width="1"/>
<line x1="385.6" y1="656.1" x2="524.5" y2="656.1" stroke="#a3a8d6" stroke-width="1"/>
<text x="438.7" y="610.2" fill="#000" font-size="10" text-anchor="start" font-weight="normal" style="font-style:italic;stroke:#000;stroke-width:0.3px;" textLength="33.3" lengthAdjust="spacing">«block»</text>
<text x="419.5" y="621.4" fill="#2d2482" font-size="9.9" text-anchor="start" font-weight="normal" style="" textLength="71.5" lengthAdjust="spacing">ClimateSensor</text>
<circle cx="393.7" cy="636.3" r="2.4" fill="none" stroke="#3d9a62" stroke-width="1"/>
<text x="400.3" y="639.3" fill="#000" font-size="9.9" text-anchor="start" font-weight="normal" style="" textLength="75.4" lengthAdjust="spacing">location: String</text>
<circle cx="393.7" cy="647.9" r="2.4" fill="none" stroke="#3d9a62" stroke-width="1"/>
<text x="400.3" y="650.9" fill="#000" font-size="9.9" text-anchor="start" font-weight="normal" style="" textLength="119.9" lengthAdjust="spacing">updateInterval: minutes</text>
<circle cx="393.7" cy="664.6" r="2.2" fill="#84be8a" stroke="#3d9a62" stroke-width="0.8"/>
<text x="400.3" y="667.6" fill="#000" font-size="9.9" text-anchor="start" font-weight="normal" style="" textLength="83.3" lengthAdjust="spacing">detectChanges()</text>
<rect x="549.6" y="598.4" width="129.6" height="74.9" rx="2.5" fill="#e3effb" stroke="#8c8cc6" stroke-width="1"/>
<line x1="549.6" y1="627.1" x2="679.2" y2="627.1" stroke="#a3a8d6" stroke-width="1"/>
<line x1="549.6" y1="656.1" x2="679.2" y2="656.1" stroke="#a3a8d6" stroke-width="1"/>
<text x="598.9" y="610.2" fill="#000" font-size="10" text-anchor="start" font-weight="normal" style="font-style:italic;stroke:#000;stroke-width:0.3px;" textLength="32.5" lengthAdjust="spacing">«block»</text>
<text x="584.0" y="621.4" fill="#2d2482" font-size="9.9" text-anchor="start" font-weight="normal" style="" textLength="61.0" lengthAdjust="spacing">SoilAnalyzer</text>
<circle cx="557.0" cy="636.3" r="2.4" fill="none" stroke="#3d9a62" stroke-width="1"/>
<text x="563.8" y="639.3" fill="#000" font-size="9.9" text-anchor="start" font-weight="normal" style="" textLength="102.6" lengthAdjust="spacing">nutrientLevel: String</text>
<circle cx="557.0" cy="647.9" r="2.4" fill="none" stroke="#3d9a62" stroke-width="1"/>
<text x="563.8" y="650.9" fill="#000" font-size="9.9" text-anchor="start" font-weight="normal" style="" textLength="71.8" lengthAdjust="spacing">phValue: Float</text>
<circle cx="557.0" cy="664.6" r="2.2" fill="#84be8a" stroke="#3d9a62" stroke-width="0.8"/>
<text x="563.8" y="667.6" fill="#000" font-size="9.9" text-anchor="start" font-weight="normal" style="" textLength="111.7" lengthAdjust="spacing">recommendFertilizer()</text>
<rect x="704.3" y="598.3" width="113.2" height="74.9" rx="2.5" fill="#e3effb" stroke="#8c8cc6" stroke-width="1"/>
<line x1="704.3" y1="627.0" x2="817.5" y2="627.0" stroke="#a3a8d6" stroke-width="1"/>
<line x1="704.3" y1="656.0" x2="817.5" y2="656.0" stroke="#a3a8d6" stroke-width="1"/>
<text x="744.2" y="610.1" fill="#000" font-size="10" text-anchor="start" font-weight="normal" style="font-style:italic;stroke:#000;stroke-width:0.3px;" textLength="34.3" lengthAdjust="spacing">«block»</text>
<text x="713.7" y="621.3" fill="#2d2482" font-size="9.9" text-anchor="start" font-weight="normal" style="" textLength="95.1" lengthAdjust="spacing">IrrigationController</text>
<circle cx="712.0" cy="636.2" r="2.4" fill="none" stroke="#3d9a62" stroke-width="1"/>
<text x="719.0" y="639.2" fill="#000" font-size="9.9" text-anchor="start" font-weight="normal" style="" textLength="94.4" lengthAdjust="spacing">waterPressure: bar</text>
<circle cx="712.0" cy="647.8" r="2.4" fill="none" stroke="#3d9a62" stroke-width="1"/>
<text x="719.0" y="650.8" fill="#000" font-size="9.9" text-anchor="start" font-weight="normal" style="" textLength="77.3" lengthAdjust="spacing">flowRate: L/min</text>
<circle cx="712.0" cy="664.5" r="2.2" fill="#84be8a" stroke="#3d9a62" stroke-width="0.8"/>
<text x="719.0" y="667.5" fill="#000" font-size="9.9" text-anchor="start" font-weight="normal" style="" textLength="76.3" lengthAdjust="spacing">activatePump()</text>
<rect x="842.4" y="598.3" width="151.8" height="74.9" rx="2.5" fill="#e3effb" stroke="#8c8cc6" stroke-width="1"/>
<line x1="842.4" y1="627.0" x2="994.2" y2="627.0" stroke="#a3a8d6" stroke-width="1"/>
<line x1="842.4" y1="656.0" x2="994.2" y2="656.0" stroke="#a3a8d6" stroke-width="1"/>
<text x="901.6" y="610.1" fill="#000" font-size="10" text-anchor="start" font-weight="normal" style="font-style:italic;stroke:#000;stroke-width:0.3px;" textLength="33.4" lengthAdjust="spacing">«block»</text>
<text x="871.7" y="621.3" fill="#2d2482" font-size="9.9" text-anchor="start" font-weight="normal" style="" textLength="93.8" lengthAdjust="spacing">CropHealthMonitor</text>
<circle cx="850.0" cy="636.2" r="2.4" fill="none" stroke="#3d9a62" stroke-width="1"/>
<text x="857.0" y="639.2" fill="#000" font-size="9.9" text-anchor="start" font-weight="normal" style="" textLength="132.5" lengthAdjust="spacing">diseaseDetection: Boolean</text>
<circle cx="850.0" cy="647.8" r="2.4" fill="none" stroke="#3d9a62" stroke-width="1"/>
<text x="857.0" y="650.8" fill="#000" font-size="9.9" text-anchor="start" font-weight="normal" style="" textLength="99.0" lengthAdjust="spacing">growthStage: String</text>
<circle cx="850.0" cy="664.5" r="2.2" fill="#84be8a" stroke="#3d9a62" stroke-width="0.8"/>
<text x="857.0" y="667.5" fill="#000" font-size="9.9" text-anchor="start" font-weight="normal" style="" textLength="70.2" lengthAdjust="spacing">detectIssues()</text>
<rect x="1018.5" y="593.2" width="181.5" height="86.5" rx="2.5" fill="#e3effb" stroke="#8c8cc6" stroke-width="1"/>
<line x1="1018.5" y1="621.9" x2="1200.0" y2="621.9" stroke="#a3a8d6" stroke-width="1"/>
<line x1="1018.5" y1="662.5" x2="1200.0" y2="662.5" stroke="#a3a8d6" stroke-width="1"/>
<text x="1033.5" y="616.2" fill="#2d2482" font-size="9.9" text-anchor="start" font-weight="normal" style="" textLength="77.3" lengthAdjust="spacing">WeatherStation</text>
<circle cx="1026.0" cy="631.1" r="2.4" fill="none" stroke="#3d9a62" stroke-width="1"/>
<text x="1033.2" y="634.1" fill="#000" font-size="9.9" text-anchor="start" font-weight="normal" style="" textLength="79.5" lengthAdjust="spacing">temperature: °C</text>
<circle cx="1026.0" cy="642.7" r="2.4" fill="none" stroke="#3d9a62" stroke-width="1"/>
<text x="1033.2" y="645.7" fill="#000" font-size="9.9" text-anchor="start" font-weight="normal" style="" textLength="70.0" lengthAdjust="spacing">pressure: hPa</text>
<circle cx="1026.0" cy="654.3" r="2.4" fill="none" stroke="#3d9a62" stroke-width="1"/>
<text x="1033.2" y="657.3" fill="#000" font-size="9.9" text-anchor="start" font-weight="normal" style="" textLength="86.3" lengthAdjust="spacing">windSpeed: km/h</text>
<circle cx="1026.0" cy="671.0" r="2.2" fill="#84be8a" stroke="#3d9a62" stroke-width="0.8"/>
<text x="1033.2" y="674.0" fill="#000" font-size="9.9" text-anchor="start" font-weight="normal" style="" textLength="36.9" lengthAdjust="spacing">report()</text>
</svg>
<div class="abs" style="left:992.6px;top:356.3px;width:33.6px;height:28.6px;border-radius:7px;background:rgba(255,255,255,.58);border:1px solid rgba(0,0,0,.05);box-shadow:0 1px 2px rgba(0,0,0,.10)"></div>
<svg class="abs" style="left:1000.4px;top:362.6px;opacity:1" width="16" height="16" viewBox="0 0 16 16"><circle cx="7.5" cy="7.5" r="5" stroke="#4b5563" stroke-width="1.3" fill="none"/><path d="M11.2 11.2L14.5 14.5M5 7.5h5M7.5 5v5" stroke="#4b5563" stroke-width="1.3"/></svg>
<div class="abs" style="left:992.6px;top:392.5px;width:33.6px;height:28.6px;border-radius:7px;background:rgba(255,255,255,.58);border:1px solid rgba(0,0,0,.05);box-shadow:0 1px 2px rgba(0,0,0,.10)"></div>
<svg class="abs" style="left:1000.4px;top:398.8px;opacity:1" width="16" height="16" viewBox="0 0 16 16"><circle cx="7.5" cy="7.5" r="5" stroke="#4b5563" stroke-width="1.3" fill="none"/><path d="M11.2 11.2L14.5 14.5M5 7.5h5" stroke="#4b5563" stroke-width="1.3"/></svg>
<div class="abs" style="left:992.6px;top:428.7px;width:33.6px;height:28.6px;border-radius:7px;background:rgba(255,255,255,.58);border:1px solid rgba(0,0,0,.05);box-shadow:0 1px 2px rgba(0,0,0,.10)"></div>
<svg class="abs" style="left:1000.4px;top:435.0px;opacity:1" width="16" height="16" viewBox="0 0 16 16"><path d="M3.2 6.2A5.3 5.3 0 1 1 2.8 9.5" stroke="#4b5563" stroke-width="1.3" fill="none"/><path d="M2.6 2.8v3.8h3.8" stroke="#4b5563" stroke-width="1.3" fill="none"/></svg>
<div class="abs" style="left:992.6px;top:464.9px;width:33.6px;height:28.6px;border-radius:7px;background:rgba(255,255,255,.58);border:1px solid rgba(0,0,0,.05);box-shadow:0 1px 2px rgba(0,0,0,.10)"></div>
<svg class="abs" style="left:1000.4px;top:471.2px;opacity:0.7" width="16" height="16" viewBox="0 0 16 16"><path d="M2 6V2h4M10 2h4v4M14 10v4h-4M6 14H2v-4M2 2l4.5 4.5M14 2l-4.5 4.5M14 14l-4.5-4.5M2 14l4.5-4.5" stroke="#4b5563" stroke-width="1.3" fill="none"/></svg>
<div class="abs" style="left:992.6px;top:501.1px;width:33.6px;height:28.6px;border-radius:7px;background:rgba(255,255,255,.58);border:1px solid rgba(0,0,0,.05);box-shadow:0 1px 2px rgba(0,0,0,.10)"></div>
<svg class="abs" style="left:1000.4px;top:507.4px;opacity:0.7" width="16" height="16" viewBox="0 0 16 16"><path d="M2 8h12M4.5 5.5L2 8l2.5 2.5M11.5 5.5L14 8l-2.5 2.5" stroke="#4b5563" stroke-width="1.3" fill="none"/></svg>
<div class="abs" style="left:230px;top:670px;width:893px;height:89px;background:#fff;border-top:1px solid #e5e7eb;z-index:5"></div>
<div class="abs" style="left:252px;top:685px;width:803px;height:60px;border-radius:10px;background:#fff;border:1px solid #e5e7eb;z-index:5"></div>
<div class="abs" style="left:267.4px;top:699.5px;font-size:12.3px;color:#6b7280;line-height:15px;white-space:nowrap;z-index:5">Type your message... (Enter to send, Shift+Enter for new line)</div>
<div class="abs" style="left:1065px;top:709px;width:36px;height:36px;border-radius:18px;background:#a5bffc;z-index:5"></div>
<svg class="abs" style="left:1074px;top:718px;z-index:5" width="18" height="18" viewBox="0 0 18 18"><path d="M15.5 2.5L2.5 8l5.5 2.2L10.2 15.5z M15.5 2.5L8 10.2" stroke="#fff" stroke-width="1.2" fill="none" stroke-linejoin="round"/></svg>
<svg class="abs" style="left:0;top:749px;z-index:9" width="10" height="10" viewBox="0 0 10 10"><path d="M0 0A10 10 0 0 0 10 10H0Z" fill="#cfcac2"/><path d="M0 0A10 10 0 0 0 10 10" stroke="#8a8a8a" stroke-width="1" fill="none"/></svg>
<svg class="abs" style="left:1113px;top:749px;z-index:9" width="10" height="10" viewBox="0 0 10 10"><path d="M10 0A10 10 0 0 1 0 10H10Z" fill="#cfcac2"/><path d="M10 0A10 10 0 0 1 0 10" stroke="#8a8a8a" stroke-width="1" fill="none"/></svg>
</body></html>
